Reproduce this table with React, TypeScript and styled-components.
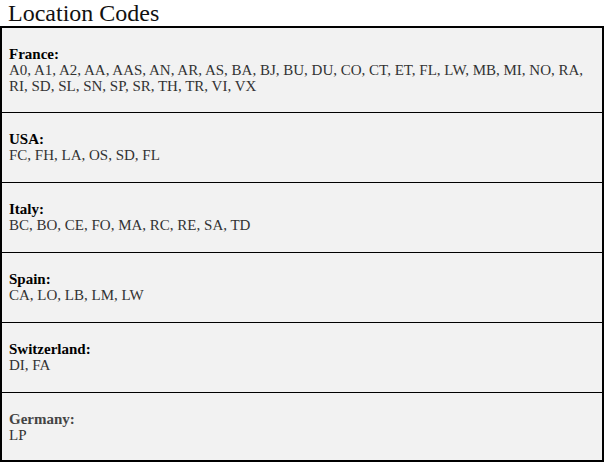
import React from 'react';
import styled, { createGlobalStyle } from 'styled-components';

const locations = [
  {
    country: 'France',
    codes: ['A0', 'A1', 'A2', 'AA', 'AAS', 'AN', 'AR', 'AS', 'BA', 'BJ', 'BU', 'DU', 'CO', 'CT', 'ET', 'FL', 'LW', 'MB', 'MI', 'NO', 'RA', 'RI', 'SD', 'SL', 'SN', 'SP', 'SR', 'TH', 'TR', 'VI', 'VX'],
  },
  { country: 'USA', codes: ['FC', 'FH', 'LA', 'OS', 'SD', 'FL'] },
  { country: 'Italy', codes: ['BC', 'BO', 'CE', 'FO', 'MA', 'RC', 'RE', 'SA', 'TD'] },
  { country: 'Spain', codes: ['CA', 'LO', 'LB', 'LM', 'LW'] },
  { country: 'Switzerland', codes: ['DI', 'FA'] },
  { country: 'Germany', codes: ['LP'], muted: true },
];

export default () => {
  return (
    <>
      <GlobalStyle />
      <Title>Location Codes</Title>
      <Box>
        {locations.map((loc) => (
          <Section key={loc.country}>
            <Country $muted={loc.muted}>{loc.country}:</Country>
            <Codes>{loc.codes.join(', ')}</Codes>
          </Section>
        ))}
      </Box>
    </>
  );
};

const GlobalStyle = createGlobalStyle`
  body {
    margin: 0;
    background: #fff;
    font-family: "Liberation Serif", "DejaVu Serif", serif;
  }
`;

const Title = styled.h1`
  margin: 0;
  padding: 0 0 0 8px;
  height: 26px;
  font-size: 24px;
  line-height: 26px;
  font-weight: normal;
  color: #111;
`;

const Box = styled.div`
  width: 604px;
  box-sizing: border-box;
  border: 2px solid #000;
  background: #f2f2f2;
`;

const Section = styled.div`
  padding: 18px 7px 19px 7px;
  border-bottom: 1px solid #000;
  &:first-child {
    padding-bottom: 18px;
  }
  &:last-child {
    padding-bottom: 17px;
    border-bottom: none;
  }
`;

const Country = styled.div<{ $muted?: boolean }>`
  font-size: 15px;
  line-height: 16px;
  font-weight: bold;
  color: ${(p) => (p.$muted ? '#444' : '#000')};
`;

const Codes = styled.div`
  font-size: 15px;
  line-height: 16px;
  color: #333;
`;
